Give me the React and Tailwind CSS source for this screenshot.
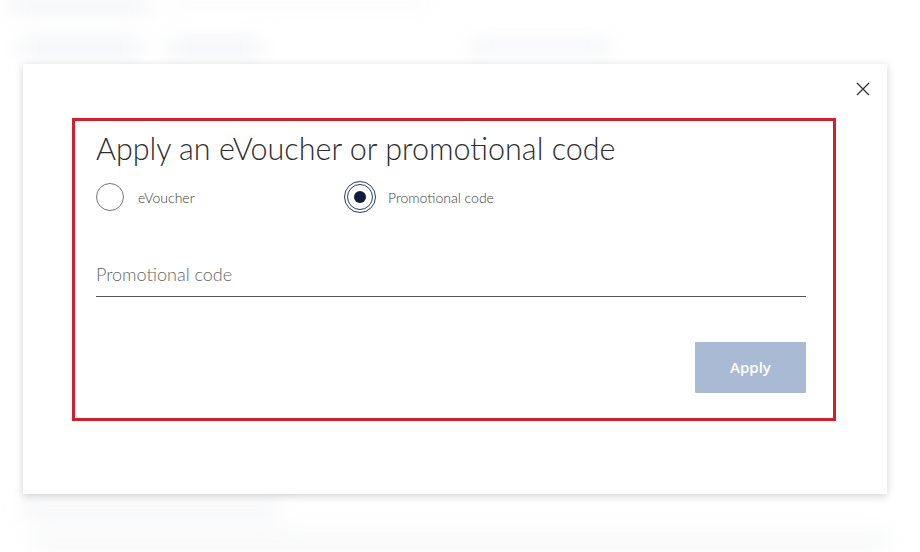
import React, { useState } from 'react';

// Promo code dialog over a blurred booking page
function Radio({ checked, label, onClick }) {
  return (
    <button type="button" onClick={onClick} className="flex items-center">
      {checked ? (
        <span className="w-[32px] h-[32px] rounded-full border-[1.5px] border-[#2a3e63] flex items-center justify-center mr-[12px]">
          <span className="w-[26px] h-[26px] rounded-full border-[1.5px] border-[#2a3e63] flex items-center justify-center">
            <span className="w-[12px] h-[12px] rounded-full bg-[#101d3d]" />
          </span>
        </span>
      ) : (
        <span className="w-[28px] h-[28px] rounded-full border-[1.5px] border-[#777] mr-[14px]" />
      )}
      <span className="text-[14px] text-[#3c3c3c] font-light">{label}</span>
    </button>
  );
}

function BlurredPage() {
  return (
    <div className="w-full h-full flex flex-col justify-between blur-[10px] opacity-60">
      <div className="flex flex-col gap-[28px]">
        <div className="flex gap-[20px] pl-[10px]">
          <div className="w-[140px] h-[12px] bg-[#e6e8ee]" />
          <div className="w-[260px] h-[6px] bg-[#eef0f3]" />
        </div>
        <div className="flex pl-[20px]">
          <div className="w-[120px] h-[16px] bg-[#e9ebf0]" />
          <div className="w-[90px] h-[16px] bg-[#e9ebf0] ml-[30px]" />
          <div className="w-[140px] h-[14px] bg-[#eceef2] ml-[210px]" />
        </div>
      </div>
      <div className="flex flex-col gap-[12px]">
        <div className="w-[260px] h-[18px] bg-[#f0f1f4] ml-[20px]" />
        <div className="w-[860px] h-[22px] bg-[#f4f5f7] ml-[30px]" />
      </div>
    </div>
  );
}

export default function App() {
  const [type, setType] = useState('promo');
  const [code, setCode] = useState('');

  return (
    <div className="relative w-[920px] h-[552px] overflow-hidden bg-white font-['Lato',sans-serif]">
      <BlurredPage />

      <div className="absolute left-[23px] top-[64px] w-[864px] h-[430px] bg-white shadow-[0_2px_8px_rgba(0,0,0,0.18)]">
        <button type="button" className="absolute right-[17px] top-[18px] text-[#333]">
          <svg width="14" height="14" viewBox="0 0 14 14" fill="none" stroke="currentColor" strokeWidth="1.3">
            <path d="M1 1L13 13M13 1L1 13" />
          </svg>
        </button>

        <div className="ml-[49px] mt-[54px] w-[764px] h-[303px] border-[3px] border-[#d0202e] pl-[21px] pr-[27px] pt-[8px]">
          <h2 className="text-[30.5px] leading-[38px] font-light text-[#2d2d2d]">
            Apply an eVoucher or promotional code
          </h2>
          <div className="flex items-center mt-[13px] h-[34px]">
            <div className="w-[248px]">
              <Radio checked={type === 'voucher'} label="eVoucher" onClick={() => setType('voucher')} />
            </div>
            <Radio checked={type === 'promo'} label="Promotional code" onClick={() => setType('promo')} />
          </div>

          <input
            value={code}
            onChange={(e) => setCode(e.target.value)}
            placeholder="Promotional code"
            className="mt-[43px] w-full h-[40px] pb-[6px] border-b border-[#555] text-[18px] font-light text-[#333] placeholder:text-[#666] outline-none"
          />

          <div className="flex justify-end mt-[45px]">
            <button
              type="button"
              className="w-[111px] h-[51px] bg-[#a9bbd4] text-white text-[15px] font-['Open_Sans',sans-serif] font-semibold rounded-[1px]"
            >
              Apply
            </button>
          </div>
        </div>
      </div>
    </div>
  );
}
